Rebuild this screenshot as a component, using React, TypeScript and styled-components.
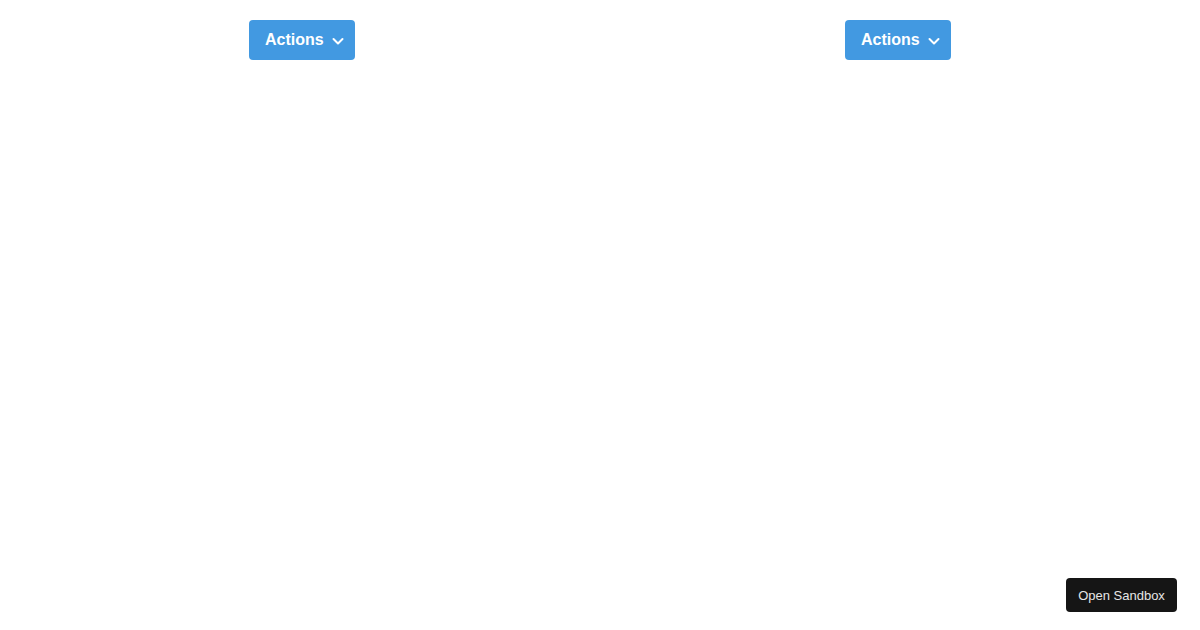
import React from "react"
import styled, { createGlobalStyle } from "styled-components"

const GlobalStyle = createGlobalStyle`
    body {
        margin: 0;
        background: #ffffff;
        font-family: "Liberation Sans", Arial, sans-serif;
    }
`

const ChevronDown: React.FunctionComponent = () => (
    <ChevronIcon width="16" height="16" viewBox="0 0 16 16" fill="none" stroke="currentColor" strokeWidth="2" strokeLinecap="round" strokeLinejoin="round">
        <path d="M3.5 6l4.5 4.5 4.5-4.5" />
    </ChevronIcon>
)

export default function App() {
    return (
        <>
            <GlobalStyle />
            <Container>
                <ActionsRow>
                    <MenuButton>
                        Actions
                        <ChevronDown />
                    </MenuButton>
                    <MenuButton>
                        Actions
                        <ChevronDown />
                    </MenuButton>
                </ActionsRow>
            </Container>
            <SandboxBadge>Open Sandbox</SandboxBadge>
        </>
    )
}

const Container = styled.div`
    display: flex;
    justify-content: center;
    padding-top: 20px;
    height: 630px;
    box-sizing: border-box;
`

const ActionsRow = styled.div`
    display: flex;
    flex-direction: row;
    justify-content: space-between;
    align-items: flex-start;
    width: 702px;
`

const MenuButton = styled.button`
    display: inline-flex;
    align-items: center;
    gap: 6px;
    height: 40px;
    width: 106px;
    padding: 0 0 0 16px;
    box-sizing: border-box;
    border: none;
    border-radius: 4px;
    background: #4299e1;
    color: #ffffff;
    font-family: "Liberation Sans", Arial, sans-serif;
    font-size: 16px;
    font-weight: 700;
    white-space: nowrap;
    cursor: pointer;
`

const ChevronIcon = styled.svg`
    flex-shrink: 0;
    margin-top: 1px;
`

const SandboxBadge = styled.a`
    position: fixed;
    right: 23px;
    bottom: 18px;
    display: flex;
    align-items: center;
    justify-content: center;
    width: 111px;
    height: 34px;
    box-sizing: border-box;
    border-radius: 4px;
    background: #151515;
    color: #e6e6e6;
    font-family: "Liberation Sans", Arial, sans-serif;
    font-size: 13px;
    text-decoration: none;
`
